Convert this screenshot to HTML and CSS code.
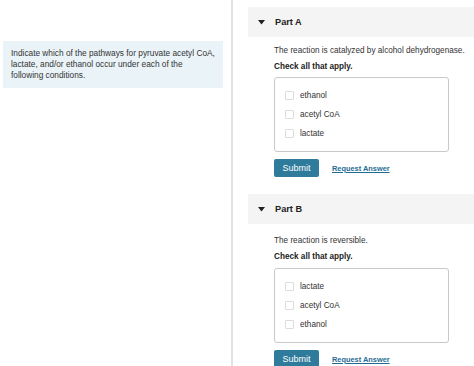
FILE: index.html
```html
<!DOCTYPE html>
<html lang="en">
<head>
  <meta charset="UTF-8">
  <meta name="viewport" content="width=device-width, initial-scale=1.0">
  <title>Pyruvate Pathways</title>
  <link rel="stylesheet" href="styles.css">
</head>
<body>

  <div class="page">
    <!-- Problem statement -->
    <div class="intro-col">
      <div class="intro-box">
        Indicate which of the pathways for pyruvate acetyl CoA, lactate, and/or ethanol occur under each of the following conditions.
      </div>
    </div>

    <!-- Parts -->
    <div class="parts-col">

      <div class="part part-a">
        <div class="part-header">
          <svg class="caret" width="7" height="5" viewBox="0 0 7 5"><polygon points="0,0 7,0 3.5,4.5" fill="#222"/></svg>
          <span>Part A</span>
        </div>
        <div class="part-body">
          <p class="question">The reaction is catalyzed by alcohol dehydrogenase.</p>
          <p class="instruction">Check all that apply.</p>
          <div class="choices">
            <label class="choice"><span class="box"></span>ethanol</label>
            <label class="choice"><span class="box"></span>acetyl CoA</label>
            <label class="choice"><span class="box"></span>lactate</label>
          </div>
          <div class="actions">
            <button class="submit-button">Submit</button>
            <a class="request-link" href="#">Request Answer</a>
          </div>
        </div>
      </div>

      <div class="part part-b">
        <div class="part-header">
          <svg class="caret" width="7" height="5" viewBox="0 0 7 5"><polygon points="0,0 7,0 3.5,4.5" fill="#222"/></svg>
          <span>Part B</span>
        </div>
        <div class="part-body">
          <p class="question">The reaction is reversible.</p>
          <p class="instruction">Check all that apply.</p>
          <div class="choices">
            <label class="choice"><span class="box"></span>lactate</label>
            <label class="choice"><span class="box"></span>acetyl CoA</label>
            <label class="choice"><span class="box"></span>ethanol</label>
          </div>
          <div class="actions">
            <button class="submit-button">Submit</button>
            <a class="request-link" href="#">Request Answer</a>
          </div>
        </div>
      </div>

    </div>
  </div>

</body>
</html>
```

FILE: styles.css
```css
/* styles.css */
body {
  font-family: "Liberation Sans", Arial, sans-serif;
  background-color: #fff;
  color: #333;
  margin: 0;
  padding: 0;
  overflow: hidden;
}

.page {
  display: flex;
  height: 366px;
}

.intro-col {
  width: 231px;
  padding: 41px 0 0 3px;
  box-sizing: border-box;
}

.intro-box {
  width: 220px;
  box-sizing: border-box;
  padding: 7px 8px;
  background-color: #eaf4f8;
  font-size: 8.3px;
  line-height: 11px;
}

.parts-col {
  flex: 1;
  border-left: 2px solid #e2e2e2;
  padding-left: 15px;
}

.part-header {
  display: flex;
  align-items: center;
  height: 30px;
  padding-left: 10px;
  background-color: #f4f4f4;
  font-size: 9.2px;
  font-weight: bold;
  color: #222;
}

.caret {
  margin-right: 10px;
}

.part-a {
  margin-top: 7px;
}

.part-b {
  margin-top: 17px;
}

.part-body {
  padding-left: 26px;
}

.question, .instruction {
  margin: 0;
  font-size: 8.2px;
  line-height: 11px;
}

.part-a .question {
  margin-top: 8px;
}

.part-b .question {
  margin-top: 11px;
}

.instruction {
  font-weight: bold;
  color: #222;
  margin-top: 5px;
}

.choices {
  width: 175px;
  box-sizing: border-box;
  margin-top: 5px;
  padding: 8px 10px;
  border: 1px solid #c9c9c9;
  border-radius: 3px;
}

.part-b .choices {
  margin-top: 6px;
}

.choice {
  display: flex;
  align-items: center;
  height: 19px;
  font-size: 8.2px;
}

.box {
  width: 7px;
  height: 7px;
  margin-right: 6px;
  border: 1px solid #dcdcdc;
  border-radius: 1px;
  background-color: #fff;
}

.actions {
  display: flex;
  align-items: center;
  margin-top: 7px;
}

.submit-button {
  height: 18px;
  width: 45px;
  padding: 0;
  background-color: #2f7b9b;
  color: #fff;
  font-family: inherit;
  font-size: 9px;
  border: none;
  border-radius: 2px;
}

.request-link {
  margin-left: 13px;
  color: #1f6d94;
  font-size: 7.4px;
  font-weight: bold;
  text-decoration: underline;
}
```
